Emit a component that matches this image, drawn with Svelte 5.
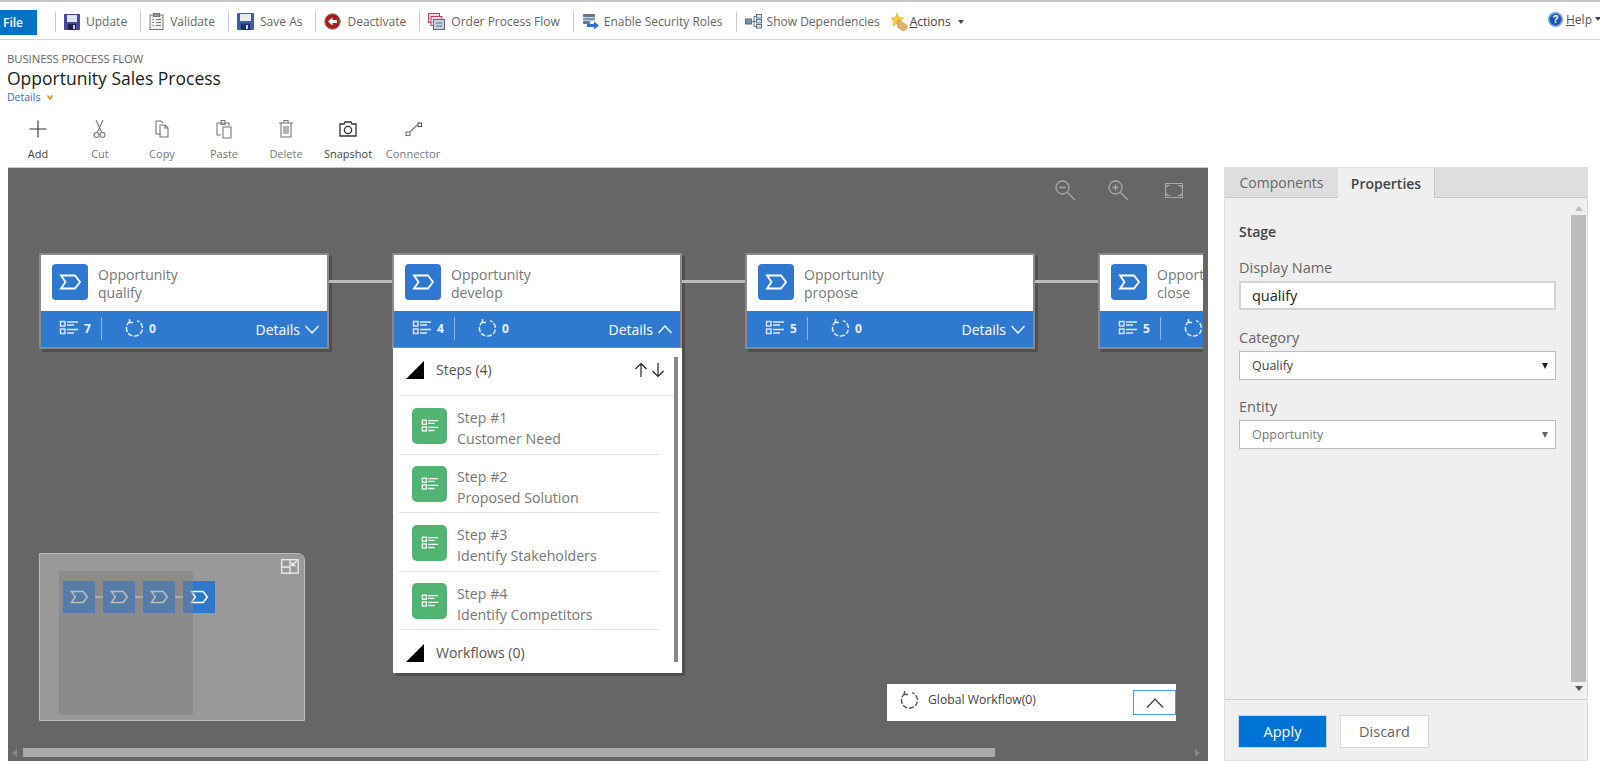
<script>
  const stages = [
    { name: 'qualify', steps: 7, open: false },
    { name: 'develop', steps: 4, open: true },
    { name: 'propose', steps: 5, open: false },
    { name: 'close', steps: 5, open: false }
  ];
  const steps = ['Customer Need', 'Proposed Solution', 'Identify Stakeholders', 'Identify Competitors'];
  const tools = ['Add', 'Cut', 'Copy', 'Paste', 'Delete', 'Snapshot', 'Connector'];
</script>

{#snippet chevron(stroke = '#fff', size = 36)}
  <svg width={size} height={size} viewBox="0 0 36 36" fill="none" stroke={stroke} stroke-width="1.800"><path d="M9 11.500H23L28 18L23 24.500H9L13.500 18Z" /></svg>
{/snippet}
{#snippet listIcon(size = 20, stroke = '#dfe9f7')}
  <svg width={size} height={size} viewBox="0 0 20 20" fill="none" stroke={stroke} stroke-width="1.400"><rect x="1.500" y="3.500" width="4.500" height="4.500" /><rect x="1.500" y="11" width="4.500" height="4.500" /><path d="M8 4H19M8 7H15M8 11.500H19M8 15H15" /></svg>
{/snippet}
{#snippet loopIcon(color = '#e8f0fa')}
  <svg class="loop-svg" width="20" height="20" viewBox="0 0 20 20" fill="none" stroke={color} stroke-width="1.400"><path d="M6 3.500A8 8 0 1 0 13 2.600" stroke-dasharray="5 1.600" /><path d="M5.500 1V4.500H9" /></svg>
{/snippet}
{#snippet tri()}
  <svg class="tri" width="18" height="18" viewBox="0 0 18 18"><path d="M0 18L18 0V18Z" fill="#000" /></svg>
{/snippet}

<div class="page">
  <header class="ribbon">
    <div class="file">File</div>
    <span class="sep first"></span>
    <div class="rb">
      <svg width="16" height="16" viewBox="0 0 16 16"><rect width="16" height="16" rx="1" fill="#45489b" /><rect x="3" y="1" width="10" height="7" fill="#dfe3f3" /><rect x="4" y="10" width="8" height="6" fill="#22243f" /><rect x="9" y="11" width="2" height="4" fill="#ccd" /></svg>
      Update
    </div>
    <span class="sep"></span>
    <div class="rb">
      <svg width="15" height="17" viewBox="0 0 15 17" fill="#f2f2f0" stroke="#777"><rect x="1" y="2" width="13" height="14.500" /><rect x="4.500" y=".5" width="6" height="3" fill="#999" /><path d="M3.500 6.500H5M7 6.500H12M3.500 9.500H5M7 9.500H12M3.500 12.500H5M7 12.500H12" /></svg>
      Validate
    </div>
    <span class="sep"></span>
    <div class="rb">
      <svg width="17" height="17" viewBox="0 0 17 17"><rect width="17" height="17" rx="1" fill="#3f5ea6" /><rect x="3" y="1" width="11" height="7" fill="#e5ebf7" /><rect x="4" y="10.500" width="9" height="6.500" fill="#23345f" /><rect x="9" y="12" width="2" height="4" fill="#cdd6ea" /></svg>
      Save As
    </div>
    <span class="sep"></span>
    <div class="rb">
      <svg width="17" height="17" viewBox="0 0 17 17"><circle cx="8.500" cy="8.500" r="8" fill="#a82020" stroke="#bbb" /><path d="M4 8.500L8.500 4.500V7H13V10H8.500V12.500Z" fill="#fff" /></svg>
      Deactivate
    </div>
    <span class="sep"></span>
    <div class="rb">
      <svg width="17" height="17" viewBox="0 0 17 17" stroke-width="1"><rect x=".5" y=".5" width="11" height="9" fill="#f3d8df" stroke="#b5405f" /><rect x="3" y="3.500" width="11" height="9" fill="#f3d8df" stroke="#b5405f" /><rect x="5.500" y="6.500" width="11" height="10" fill="#c8d3e2" stroke="#5d6b80" /><path d="M8 10H14M8 13H14" stroke="#5d6b80" /></svg>
      Order Process Flow
    </div>
    <span class="sep"></span>
    <div class="rb tight">
      <svg width="17" height="17" viewBox="0 0 17 17"><rect x="1" y="1" width="12" height="3" rx="1" fill="#5f7694" /><rect x="1" y="4.500" width="12" height="3" rx="1" fill="#8395ad" /><rect x="1" y="8" width="7" height="3" rx="1" fill="#5f7694" /><path d="M5 11H12V8.500L17 12.500L12 16.500V14H5Z" fill="#2a6fd0" /></svg>
      Enable Security Roles
    </div>
    <span class="sep"></span>
    <div class="rb tight">
      <svg width="17" height="15" viewBox="0 0 17 15" fill="#dce4ee" stroke="#5f7489"><rect x=".5" y="5" width="6" height="5" fill="#7a90a8" /><rect x="11.500" y=".5" width="5" height="3.500" /><rect x="11.500" y="5.500" width="5" height="3.500" /><rect x="11.500" y="10.500" width="5" height="3.500" /><path d="M6.500 7.500H11.500M9 2.500V12.500M9 2.500H11.500M9 12.500H11.500" fill="none" /></svg>
      Show Dependencies
    </div>
    <div class="rb actions">
      <svg width="17" height="18" viewBox="0 0 17 18"><path d="M6 0L8 4.500L12.500 5L9 8.500L10 13L6 10.500L2 13L3 8.500L0 5L4.500 4.500Z" fill="#f5cf3a" stroke="#d9a520" stroke-width=".6" /><path d="M6 8C8.500 7 11 8.500 13 10.500L16 12.500C17 15 14.500 18 11.500 17.500L7 14.500Z" fill="#e6b565" stroke="#a87a30" stroke-width=".6" /></svg>
      <span><u>A</u>ctions</span>
      <i class="caret"></i>
    </div>
    <div class="help">
      <svg width="15" height="15" viewBox="0 0 15 15"><circle cx="7.500" cy="7.500" r="7.500" fill="#6c9fe0" /><circle cx="7.500" cy="7.500" r="5.800" fill="#1d54ad" /><text x="7.500" y="11" text-anchor="middle" font-size="10" font-weight="700" fill="#fff" font-family="Liberation Sans, sans-serif">?</text></svg>
      <span><u>H</u>elp</span>
      <i class="caret dark"></i>
    </div>
  </header>

  <section class="head">
    <div class="kicker">BUSINESS PROCESS FLOW</div>
    <h1>Opportunity Sales Process</h1>
    <div class="details">
      Details
      <svg width="6" height="5" viewBox="0 0 6 5" fill="none" stroke="#d9881a" stroke-width="1.500"><path d="M.5 .5L3 4L5.500 .5" /></svg>
    </div>
  </section>

  <nav class="tools">
    {#each tools as t}
      <div class="tool" class:strong={t === 'Add' || t === 'Snapshot'} class:last={t === 'Connector'}>
        <svg width="24" height="24" viewBox="0 0 24 24" fill="none" stroke={t === 'Add' || t === 'Snapshot' ? '#333' : '#777'} stroke-width="1.100">
          {#if t === 'Add'}
            <path d="M12 3.500V20.500M3.500 12H20.500" />
          {:else if t === 'Cut'}
            <path d="M8 3L13.500 15M15 3L9.500 15" /><circle cx="8.500" cy="18" r="2.500" /><circle cx="14.500" cy="18" r="2.500" />
          {:else if t === 'Copy'}
            <path d="M11 17H6V4H11L13 6" /><path d="M10 8H15L18 11V20H10Z" /><path d="M15 8V11H18" />
          {:else if t === 'Paste'}
            <path d="M9 18H5V6H17V9" /><rect x="9" y="3.500" width="4" height="4" /><path d="M11 10H19V21H11Z" />
          {:else if t === 'Delete'}
            <path d="M5 6H19M10 6V3.500H14V6M7 6V20H17V6M10 9V17M12 9V17M14 9V17" />
          {:else if t === 'Snapshot'}
            <path d="M4 7H8L9 5H15L16 7H20V19H4Z" stroke-width="1.300" /><circle cx="12" cy="13" r="3.600" stroke-width="1.300" />
          {:else}
            <rect x="5" y="15" width="4" height="3.500" stroke="#8a6a55" /><rect x="17" y="6" width="3.500" height="3.500" stroke="#555" /><path d="M9 15L16 8" stroke="#777" />
          {/if}
        </svg>
        <span>{t}</span>
      </div>
    {/each}
  </nav>

  <main class="main">
    <section class="canvas">
      <div class="canvas-tools">
        <svg width="24" height="24" viewBox="0 0 24 24" fill="none" stroke="#aaa" stroke-width="1.300"><circle cx="9.500" cy="9.500" r="6.500" /><path d="M14.500 14.500L22 22M6.500 9.500H12.500" /></svg>
        <svg width="24" height="24" viewBox="0 0 24 24" fill="none" stroke="#aaa" stroke-width="1.300"><circle cx="9.500" cy="9.500" r="6.500" /><path d="M14.500 14.500L22 22M6.500 9.500H12.500M9.500 6.500V12.500" /></svg>
        <svg class="fit" width="18" height="15" viewBox="0 0 18 15" fill="none" stroke="#aaa"><rect x=".5" y=".5" width="17" height="14" /><path d="M2 4.500V2.500H5M13 2.500H16V4.500M2 10.500V12.500H5M13 12.500H16V10.500" stroke-width="1.200" /></svg>
      </div>

      <div class="viewport">
        <div class="flow">
          {#each stages as s, i}
            {#if i > 0}<div class="link"></div>{/if}
            <article class="card">
              <div class="card-top">
                <div class="stage-icon">{@render chevron()}</div>
                <div class="names"><div>Opportunity</div><div>{s.name}</div></div>
              </div>
              <div class="card-foot">
                <div class="count">{@render listIcon()}<b>{s.steps}</b></div>
                <span class="vsep"></span>
                <div class="count loop">{@render loopIcon()}<b>0</b></div>
                <div class="det">
                  Details
                  <svg width="14" height="9" viewBox="0 0 14 9" fill="none" stroke="#fff" stroke-width="1.200"><path d={s.open ? 'M.5 8L7 1L13.500 8' : 'M.5 1L7 8L13.500 1'} /></svg>
                </div>
              </div>
              {#if s.open}
                <div class="drop">
                  <div class="drop-head">
                    {@render tri()}
                    <span>Steps (4)</span>
                    <svg class="arrows" width="32" height="16" viewBox="0 0 32 16" fill="none" stroke="#222" stroke-width="1.200"><path d="M7 15V2M1.500 7L7 1.500L12.500 7M24 1V14M18.500 9L24 14.500L29.500 9" /></svg>
                  </div>
                  {#each steps as st, k}
                    <div class="step">
                      <div class="step-icon">{@render listIcon(18, '#fff')}</div>
                      <div class="names small"><div>Step #{k + 1}</div><div>{st}</div></div>
                    </div>
                  {/each}
                  <div class="drop-foot">{@render tri()}<span>Workflows (0)</span></div>
                  <div class="drop-scroll"></div>
                </div>
              {/if}
            </article>
          {/each}
        </div>
      </div>

      <aside class="mini">
        <svg class="expand" width="18" height="15" viewBox="0 0 18 15" fill="none" stroke="#eee" stroke-width="1.300"><rect x=".7" y=".7" width="16.500" height="13.500" /><path d="M.7 8H9V14M9 8V.7M11 6.500L16 1.500M11 3V6.500H14.500" /></svg>
        <div class="mini-view"></div>
        <div class="mini-row">
          {#each [0, 1, 2, 3] as n}
            {#if n > 0}<span class="mini-link"></span>{/if}
            <div class="mini-node">{@render chevron('#fff', 30)}</div>
          {/each}
        </div>
      </aside>

      <aside class="global">
        {@render loopIcon('#555')}
        <span>Global Workflow(0)</span>
        <button aria-label="Expand"><svg width="18" height="10" viewBox="0 0 18 10" fill="none" stroke="#333" stroke-width="1.100"><path d="M1 9.500L9 1L17 9.500" /></svg></button>
      </aside>

      <div class="hscroll">
        <i class="al"></i>
        <div class="hthumb"></div>
        <i class="ar"></i>
      </div>
    </section>

    <aside class="panel">
      <div class="tabs">
        <div class="tab">Components</div>
        <div class="tab active">Properties</div>
      </div>
      <div class="body">
        <div class="form">
          <h2>Stage</h2>
          <label for="dn">Display Name</label>
          <input id="dn" value="qualify" />
          <label for="cat">Category</label>
          <div class="sel"><select id="cat"><option>Qualify</option></select></div>
          <label for="ent">Entity</label>
          <div class="sel dim"><select id="ent"><option>Opportunity</option></select></div>
        </div>
        <div class="vscroll">
          <i class="up"></i>
          <div class="vthumb"></div>
          <i class="down"></i>
        </div>
      </div>
      <div class="foot">
        <button class="apply">Apply</button>
        <button class="discard">Discard</button>
      </div>
    </aside>
  </main>
</div>

<style>
  :global(body) { margin: 0; background: #fff; }
  * { box-sizing: border-box; }
  .page {
    width: 1600px; height: 761px; overflow: hidden; display: flex; flex-direction: column;
    font-family: "Open Sans", "Liberation Sans", sans-serif; color: #555; border-top: 2px solid #c6c6c6;
  }
  .ribbon {
    height: 38px; flex: none; display: flex; align-items: center; border-bottom: 1px solid #d8d8d8;
    font-size: 12px; color: #666; padding-top: 2px;
  }
  .file {
    width: 37px; height: 25px; background: #0072c6; color: #fff; font-size: 12px; font-weight: 600;
    display: flex; align-items: center; padding-left: 3px; margin-top: 1px;
  }
  .sep { width: 1px; height: 20px; background: #c8c8c8; margin: 0 8px 0 13px; flex: none; }
  .sep.first { margin-left: 18px; }
  .rb { display: flex; align-items: center; gap: 6px; white-space: nowrap; }
  .rb.tight { gap: 5px; }
  .actions { margin-left: 11px; gap: 2px; color: #444; }
  .caret { display: block; border: 3px solid transparent; border-top: 4px solid #444; border-bottom: 0; margin-left: 5px; }
  .help { margin-left: auto; display: flex; align-items: center; gap: 3px; color: #555; margin-top: -5px; width: 52px; flex: none; white-space: nowrap; }
  .help svg { flex: none; }
  .caret.dark { margin-left: 0; flex: none; }

  .head { height: 66px; flex: none; padding: 11px 0 0 7px; }
  .kicker { font-size: 11.400px; line-height: 15px; color: #666; letter-spacing: -.1px; }
  h1 { margin: 1px 0 0; font-size: 17.500px; line-height: 22px; font-weight: 500; color: #1c1c1c; }
  .details { font-size: 10.500px; line-height: 14px; color: #3b6cb8; margin-top: 1px; display: flex; align-items: center; gap: 7px; }

  .tools { height: 61px; flex: none; display: flex; padding-left: 7px; padding-top: 11px; }
  .tool { width: 62px; display: flex; flex-direction: column; align-items: center; font-size: 11px; color: #777; gap: 5px; white-space: nowrap; }
  .tool.strong { color: #444; }
  .tool.last { margin-left: 3px; font-size: 11.200px; }

  .main { flex: 1; display: flex; margin-left: 8px; min-height: 0; }
  .canvas { width: 1200px; flex: none; background: #666; position: relative; border-top: 1px solid #c8c8c8; overflow: hidden; }
  .canvas-tools { position: absolute; top: 10px; right: 25px; display: flex; align-items: center; gap: 29px; }
  .fit { margin-left: 6px; }
  .viewport { position: absolute; left: 0; top: 0; width: 1195px; height: 575px; overflow: hidden; padding: 85px 0 0 31px; }
  .flow { display: flex; align-items: flex-start; width: max-content; }
  .link { width: 63px; height: 3px; background: #bbb; margin-top: 27px; position: relative; z-index: 1; }
  .card { width: 290px; height: 96px; border: 2px solid #8a8a8a; box-shadow: 3px 3px 0 #4f4f4f; position: relative; background: #fff; flex: none; }
  .card-top { height: 56px; display: flex; align-items: center; padding: 0 0 2px 11px; gap: 10px; background: #fff; }
  .stage-icon { width: 36px; height: 36px; background: #2f78d0; border-radius: 4px; }
  .names { font-size: 14px; line-height: 18px; color: #777; padding-top: 4px; }
  .card-foot { height: 36px; background: #3079d1; display: flex; align-items: center; color: #fff; padding-left: 18px; padding-bottom: 2px; }
  .count { display: flex; align-items: center; gap: 5px; font-size: 12px; color: #e8f0fa; }
  .vsep { width: 1px; height: 23px; background: #8db6e6; margin-left: 10px; }
  .loop { margin-left: 22px; }
  .det { margin-left: auto; margin-right: 8px; display: flex; align-items: center; gap: 5px; font-size: 14px; margin-top: 3px; }

  .drop { position: absolute; left: -1px; top: 93px; width: 289px; height: 325px; background: #fff; box-shadow: 3px 3px 0 #4f4f4f; z-index: 2; padding: 0 6px; }
  .drop-head { height: 48px; display: flex; align-items: center; gap: 12px; padding: 0 7px 4px; border-bottom: 1px solid #e8e8e8; font-size: 14px; color: #555; }
  .tri { flex: none; }
  .arrows { margin-left: auto; margin-right: 3px; }
  .step { height: 58.500px; width: 260px; display: flex; align-items: center; gap: 10px; padding-left: 13px; border-bottom: 1px solid #e2e2e2; padding-top: 2px; }
  .step-icon { width: 35px; height: 36px; background: #52b473; border-radius: 5px; display: flex; align-items: center; justify-content: center; }
  .names.small { font-size: 14.200px; line-height: 21px; color: #777; padding-top: 5px; }
  .drop-foot { display: flex; align-items: center; gap: 12px; padding: 13px 7px 0; font-size: 14px; color: #555; }
  .drop-scroll { position: absolute; top: 9px; right: 4px; width: 4px; height: 305px; background: #888; }

  .mini { position: absolute; left: 31px; top: 385px; width: 266px; height: 168px; background: #999; border: 1px solid #bbb; border-top-right-radius: 7px; }
  .expand { position: absolute; right: 5px; top: 5px; }
  .mini-view { position: absolute; left: 19px; top: 17px; width: 134px; height: 144px; background: rgba(125,125,125,.5); z-index: 1; }
  .mini-row { position: absolute; left: 23px; top: 27px; display: flex; align-items: center; }
  .mini-node { width: 32px; height: 32px; background: #2f78d0; display: flex; align-items: center; justify-content: center; }
  .mini-link { width: 8px; height: 2px; background: #ddd; }

  .global { position: absolute; left: 879px; top: 516px; width: 289px; height: 37px; background: #fff; display: flex; align-items: center; padding-left: 12px; gap: 9px; font-size: 12.200px; color: #444; padding-bottom: 6px; }
  .global button { position: absolute; right: 0; top: 6px; width: 43px; height: 25px; background: #fff; border: 1px solid #4a9be8; display: flex; align-items: center; justify-content: center; padding: 0; }

  .hscroll { position: absolute; left: 0; right: 0; bottom: 4px; height: 9px; display: flex; align-items: center; }
  .hthumb { width: 972px; height: 9px; background: #aaa; margin-left: 6px; }
  .al { border: 4px solid transparent; border-right: 5px solid #888; border-left: 0; margin-left: 4px; }
  .ar { border: 4px solid transparent; border-left: 5px solid #888; border-right: 0; margin-left: auto; margin-right: 8px; }

  .panel { width: 364px; flex: none; margin-left: 16px; background: #efefef; border: 1px solid #e0e0e0; display: flex; flex-direction: column; }
  .tabs { height: 30px; flex: none; background: #dedede; display: flex; border-bottom: 1px solid #c8c8c8; }
  .tab { width: 113px; display: flex; align-items: center; justify-content: center; font-size: 14px; color: #666; }
  .tab.active { width: 97px; background: #efefef; color: #444; font-weight: 600; height: 30px; border-right: 1px solid #c8c8c8; }
  .body { flex: 1; min-height: 0; display: flex; border-bottom: 1px solid #ccc; }
  .form { width: 346px; flex: none; padding: 24px 0 0 14px; display: flex; flex-direction: column; }
  h2 { margin: 0 0 16px; font-size: 14px; line-height: 20px; font-weight: 600; color: #444; }
  label { font-size: 14.500px; line-height: 20px; color: #666; margin-bottom: 3px; }
  input, select { width: 317px; height: 29px; font-family: inherit; background: #fff; border: 2px solid #d4d4d4; }
  input { padding: 0 11px; font-size: 14.500px; color: #222; margin-bottom: 17.500px; outline: 0; flex: none; }
  .sel { position: relative; width: 317px; height: 29px; margin-bottom: 17.500px; flex: none; }
  select { appearance: none; display: block; border: 1px solid #bdbdbd; padding: 0 12px; font-size: 12.500px; color: #444; border-radius: 0; }
  .sel::after { content: ""; position: absolute; right: 8px; top: 12px; border: 3px solid transparent; border-top: 6px solid #222; border-bottom: 0; }
  .dim select { color: #777; }
  .dim::after { border-top-color: #666; }
  .vscroll { width: 15px; display: flex; flex-direction: column; align-items: center; }
  .vthumb { width: 15px; flex: 1; background: #bdbdbd; margin: 4px 0; }
  .up { border: 4px solid transparent; border-bottom: 5px solid #bbb; border-top: 0; margin-top: 8px; }
  .down { border: 4px solid transparent; border-top: 5px solid #555; border-bottom: 0; margin-bottom: 8px; }
  .foot { height: 60px; flex: none; display: flex; gap: 13px; padding: 15px 0 0 13px; }
  .foot button { width: 89px; height: 33px; font-family: inherit; font-size: 14.500px; padding: 0; }
  .apply { background: #0072d6; color: #fff; border: 1px solid #bcd4ee; }
  .discard { background: #fff; color: #666; border: 1px solid #d8d8d8; }
</style>
